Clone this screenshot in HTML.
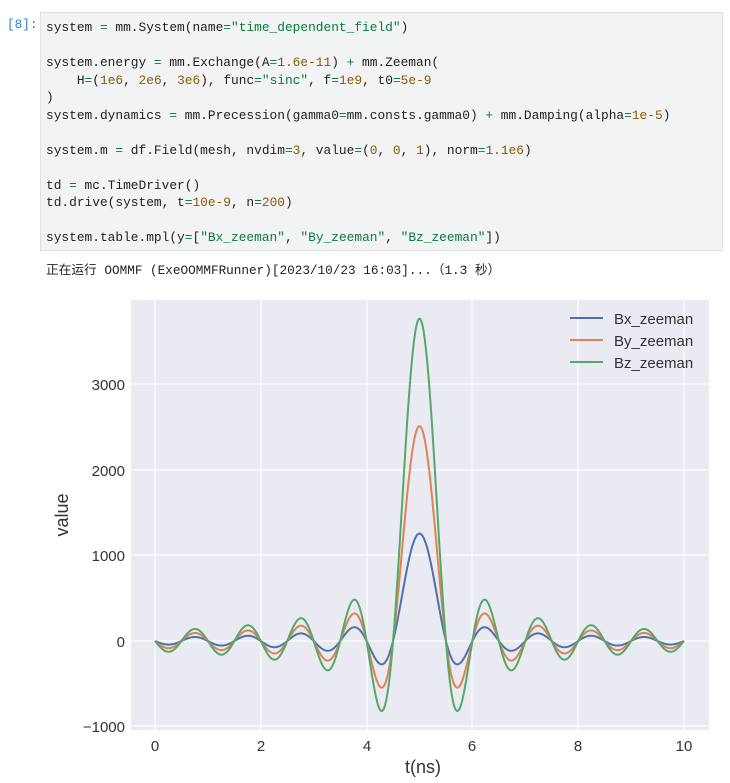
<!DOCTYPE html>
<html><head><meta charset="utf-8"><style>
body{margin:0;width:730px;height:783px;background:#fff;overflow:hidden;position:relative;font-family:"Liberation Mono",monospace}
.prompt{position:absolute;left:7px;top:17px;color:#307fc1;font-size:12.7px}
.cell{position:absolute;left:40px;top:12px;width:683px;height:239px;background:#f2f3f5;border:1px solid #dfe0e2;box-sizing:border-box}
pre{margin:0;position:absolute;left:5px;top:6px;font-family:"Liberation Mono",monospace;font-size:12.85px;line-height:17.5px;color:#222}
.s{color:#0b7a3a}.n{color:#8a5a00}.o{color:#0b7a3a}
.out{position:absolute;left:46px;top:259px;font-size:12.7px;color:#222;font-family:"Liberation Mono","Noto Sans CJK SC",monospace}
svg{position:absolute;left:0;top:0}
</style></head><body>
<div class="prompt">[8]:</div>
<div class="cell"><pre>system <span class="o">=</span> mm.System(name<span class="o">=</span><span class="s">"time_dependent_field"</span>)

system.energy <span class="o">=</span> mm.Exchange(A<span class="o">=</span><span class="n">1.6e-11</span>) <span class="o">+</span> mm.Zeeman(
    H<span class="o">=</span>(<span class="n">1e6</span>, <span class="n">2e6</span>, <span class="n">3e6</span>), func<span class="o">=</span><span class="s">"sinc"</span>, f<span class="o">=</span><span class="n">1e9</span>, t0<span class="o">=</span><span class="n">5e-9</span>
)
system.dynamics <span class="o">=</span> mm.Precession(gamma0<span class="o">=</span>mm.consts.gamma0) <span class="o">+</span> mm.Damping(alpha<span class="o">=</span><span class="n">1e-5</span>)

system.m <span class="o">=</span> df.Field(mesh, nvdim<span class="o">=</span><span class="n">3</span>, value<span class="o">=</span>(<span class="n">0</span>, <span class="n">0</span>, <span class="n">1</span>), norm<span class="o">=</span><span class="n">1.1e6</span>)

td <span class="o">=</span> mc.TimeDriver()
td.drive(system, t<span class="o">=</span><span class="n">10e-9</span>, n<span class="o">=</span><span class="n">200</span>)

system.table.mpl(y<span class="o">=</span>[<span class="s">"Bx_zeeman"</span>, <span class="s">"By_zeeman"</span>, <span class="s">"Bz_zeeman"</span>])</pre></div>
<div class="out">正在运行 OOMMF (ExeOOMMFRunner)[2023/10/23 16:03]...（1.3 秒）</div>
<svg width="730" height="783" font-family="Liberation Sans, sans-serif">
<rect x="131" y="300" width="578" height="430" fill="#eaeaf2"/>
<g stroke="#fff" stroke-width="1.2">
<line x1="155" y1="300" x2="155" y2="730"/><line x1="261" y1="300" x2="261" y2="730"/><line x1="367" y1="300" x2="367" y2="730"/><line x1="472" y1="300" x2="472" y2="730"/><line x1="578" y1="300" x2="578" y2="730"/><line x1="684" y1="300" x2="684" y2="730"/>
<line x1="131" y1="726" x2="709" y2="726"/><line x1="131" y1="641" x2="709" y2="641"/><line x1="131" y1="555" x2="709" y2="555"/><line x1="131" y1="470" x2="709" y2="470"/><line x1="131" y1="384" x2="709" y2="384"/>
</g>
<g fill="none" stroke-width="2">
<path id="p1" stroke="#4c72b0"/><path id="p2" stroke="#dd8452"/><path id="p3" stroke="#55a868"/>
</g>
<g font-size="15" fill="#333" text-anchor="end">
<text x="125" y="390">3000</text><text x="125" y="476">2000</text><text x="125" y="561">1000</text><text x="125" y="647">0</text><text x="125" y="732">−1000</text>
</g>
<g font-size="15" fill="#333" text-anchor="middle">
<text x="155" y="751">0</text><text x="261" y="751">2</text><text x="367" y="751">4</text><text x="472" y="751">6</text><text x="578" y="751">8</text><text x="684" y="751">10</text>
<text x="423" y="773" font-size="18">t(ns)</text>
</g>
<text transform="translate(68,515) rotate(-90)" font-size="18" fill="#333" text-anchor="middle">value</text>
<g stroke-width="2"><line x1="570" y1="318" x2="603" y2="318" stroke="#4c72b0"/><line x1="570" y1="340" x2="603" y2="340" stroke="#dd8452"/><line x1="570" y1="362" x2="603" y2="362" stroke="#55a868"/></g>
<g font-size="15" fill="#333"><text x="614" y="324">Bx_zeeman</text><text x="614" y="346">By_zeeman</text><text x="614" y="368">Bz_zeeman</text></g>
</svg>
<script>
var A=[1256.6,2513.3,3769.9];
for(var k=0;k<3;k++){var d="";for(var i=0;i<=1000;i++){var t=i*10/1000;var u=2*Math.PI*(t-5);var v=Math.abs(u)<1e-9?1:Math.sin(u)/u;var x=155+t*52.9;var y=641-A[k]*v*0.0855;d+=(i?"L":"M")+x.toFixed(2)+","+y.toFixed(2);}document.getElementById("p"+(k+1)).setAttribute("d",d);}
</script>
</body></html>
